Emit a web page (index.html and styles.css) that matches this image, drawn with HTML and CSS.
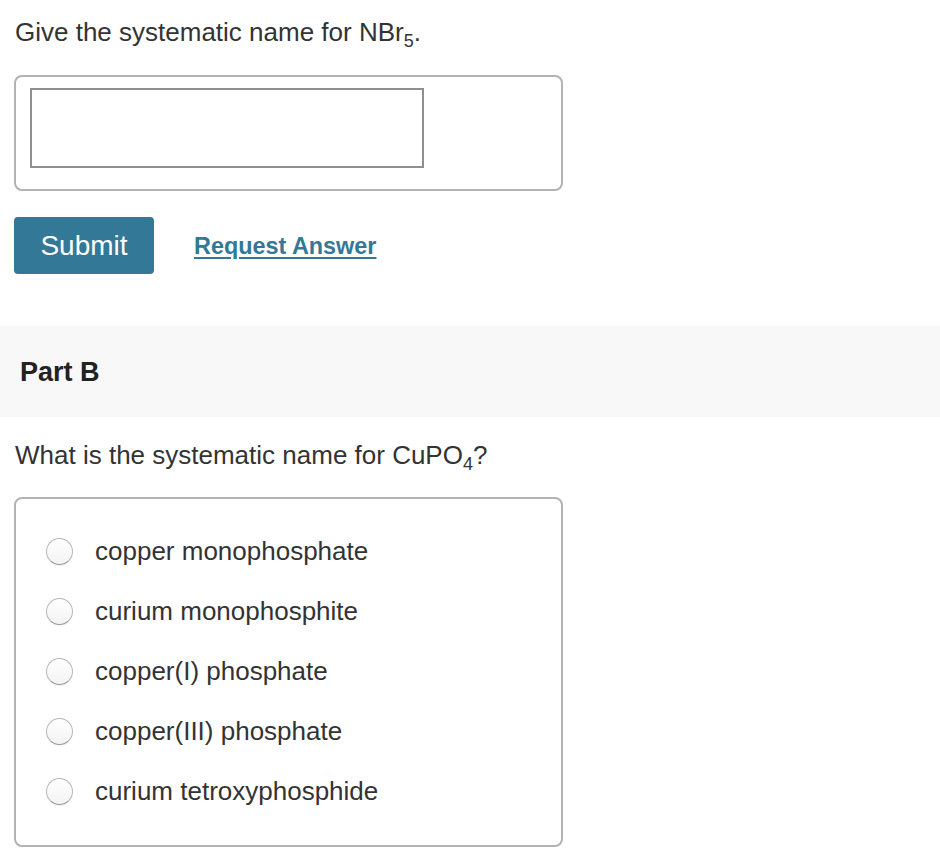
FILE: index.html
```html
<!DOCTYPE html>
<html lang="en">
<head>
<meta charset="utf-8">
<title>Systematic names</title>
<link rel="stylesheet" href="styles.css">
</head>
<body>
<section class="part">
  <p class="prompt">Give the systematic name for NBr<sub>5</sub>.</p>
  <div class="answer-box">
    <input class="answer-input" type="text" aria-label="Answer">
  </div>
  <div class="actions">
    <button class="submit" type="button">Submit</button>
    <a class="request" href="#">Request Answer</a>
  </div>
</section>
<header class="part-header">
  <h2 class="part-title">Part B</h2>
</header>
<section class="part">
  <p class="prompt prompt-b">What is the systematic name for CuPO<sub>4</sub>?</p>
  <div class="choices">
    <label class="choice"><input class="radio" type="radio" name="b"><span>copper monophosphate</span></label>
    <label class="choice"><input class="radio" type="radio" name="b"><span>curium monophosphite</span></label>
    <label class="choice"><input class="radio" type="radio" name="b"><span>copper(I) phosphate</span></label>
    <label class="choice"><input class="radio" type="radio" name="b"><span>copper(III) phosphate</span></label>
    <label class="choice"><input class="radio" type="radio" name="b"><span>curium tetroxyphosphide</span></label>
  </div>
</section>
</body>
</html>
```
FILE: styles.css
```css
* { box-sizing: border-box; }
html, body { margin: 0; padding: 0; background: #fff; }
body {
  font-family: "Liberation Sans", Arial, Helvetica, sans-serif;
  font-size: 26px;
  line-height: 30px;
  color: #333;
}
.part { padding: 0 0 0 14px; }
.prompt {
  margin: 17px 0 0 1px;
  line-height: 30px;
}
.prompt sub {
  font-size: 18px;
  line-height: 0;
  vertical-align: -6px;
}
.answer-box {
  margin-top: 28px;
  width: 549px;
  border: 2px solid #b3b3b3;
  border-radius: 8px;
  padding: 11px 14px 21px 14px;
}
.answer-input {
  display: block;
  width: 394px;
  height: 80px;
  margin: 0;
  border: 2px solid #8e8e8e;
  background: #fff;
  font: inherit;
}
.actions {
  display: flex;
  align-items: center;
  gap: 40px;
  margin-top: 26px;
}
.submit {
  width: 140px;
  height: 57px;
  border: 0;
  border-radius: 4px;
  background: #337896;
  color: #fff;
  font-family: inherit;
  font-size: 28px;
  padding: 0;
}
.request {
  color: #337896;
  font-weight: bold;
  font-size: 23.4px;
  text-decoration: underline;
  text-underline-offset: 3px;
  text-decoration-thickness: 2px;
}
.part-header {
  margin-top: 52px;
  height: 91px;
  background: #f8f8f8;
  display: flex;
  align-items: center;
  padding-left: 20px;
}
.part-title {
  margin: 0;
  font-size: 27px;
  line-height: 30px;
  font-weight: bold;
  color: #222;
}
.prompt-b { margin-top: 23px; }
.choices {
  margin-top: 27px;
  width: 549px;
  border: 2px solid #b3b3b3;
  border-radius: 8px;
  padding: 22px 0 24px 30px;
  display: flex;
  flex-direction: column;
}
.choice {
  height: 60px;
  display: flex;
  align-items: center;
  gap: 22px;
}
.radio {
  appearance: none;
  -webkit-appearance: none;
  margin: 0;
  width: 27px;
  height: 27px;
  border-radius: 50%;
  border: 1px solid #b8b8b8;
  border-bottom-color: #9a9a9a;
  background: linear-gradient(#ffffff, #f3f3f3);
  box-shadow: 0 1px 1px rgba(0,0,0,0.06);
  flex: none;
}
```
